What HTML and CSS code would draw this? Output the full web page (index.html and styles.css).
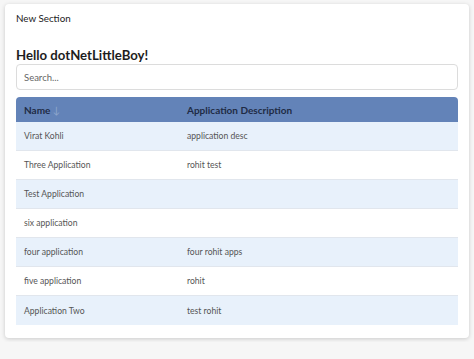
FILE: index.html
```html
<!DOCTYPE html>
<html lang="en">
  <head>
    <meta charset="UTF-8" />
    <title>New Section</title>
    <link rel="stylesheet" href="styles.css">
  </head>
  <body>
    <div class="card">
      <div class="card-title">New Section</div>
      <h1>Hello dotNetLittleBoy!</h1>
      <input class="search" type="text" placeholder="Search..." />
      <table class="grid">
        <thead>
          <tr>
            <th class="col-name">Name <span class="sort">&#8595;</span></th>
            <th>Application Description</th>
          </tr>
        </thead>
        <tbody>
          <tr><td>Virat Kohli</td><td>application desc</td></tr>
          <tr><td>Three Application</td><td>rohit test</td></tr>
          <tr><td>Test Application</td><td></td></tr>
          <tr><td>six application</td><td></td></tr>
          <tr><td>four application</td><td>four rohit apps</td></tr>
          <tr><td>five application</td><td>rohit</td></tr>
          <tr><td>Application Two</td><td>test rohit</td></tr>
        </tbody>
      </table>
    </div>
  </body>
</html>
```

FILE: styles.css
```css
* {
  margin: 0;
  padding: 0;
  box-sizing: border-box;
}

:root {
  --header-blue: #6383b8;
  --header-text: #1f2b45;
  --row-alt: #e8f1fb;
  --row-border: #e1e6ed;
  --text-color: #555;
}

body {
  font-family: "Lato", "Noto Sans", sans-serif;
  background: #f6f6f6;
  color: var(--text-color);
  padding: 4px 5px;
}

.card {
  background: #fff;
  border-radius: 4px;
  box-shadow: 0 1px 4px rgba(0, 0, 0, 0.18);
  padding: 8px 11px 12px 11px;
  height: 334px;
}

.card-title {
  font-size: 9.8px;
  color: #222;
  line-height: 12px;
}

h1 {
  font-size: 13.2px;
  font-weight: bold;
  color: #1d1d1d;
  margin-top: 23px;
  line-height: 16px;
}

.search {
  display: block;
  width: 100%;
  height: 26px;
  margin-top: 1px;
  border: 1px solid #dcdcdc;
  border-radius: 4px;
  padding: 0 7px;
  font-family: inherit;
  font-size: 9.5px;
  color: #555;
}

.search::placeholder {
  color: #666;
}

.grid {
  width: 100%;
  border-collapse: separate;
  border-spacing: 0;
  margin-top: 7px;
  font-size: 8.6px;
}

.grid th {
  background: var(--header-blue);
  color: var(--header-text);
  font-weight: bold;
  font-size: 10px;
  text-align: left;
  height: 25px;
  padding: 0 8px;
}

.grid th:first-child {
  border-top-left-radius: 4px;
}

.grid th:last-child {
  border-top-right-radius: 4px;
}

.col-name {
  width: 163px;
}

.sort {
  font-weight: normal;
  color: #8fa6cc;
}

.grid td {
  height: 29px;
  padding: 0 8px;
  border-bottom: 1px solid var(--row-border);
  color: #555;
}

.grid tbody tr:nth-child(odd) td {
  background: var(--row-alt);
}

.grid tbody tr:last-child td {
  border-bottom: none;
}
```
